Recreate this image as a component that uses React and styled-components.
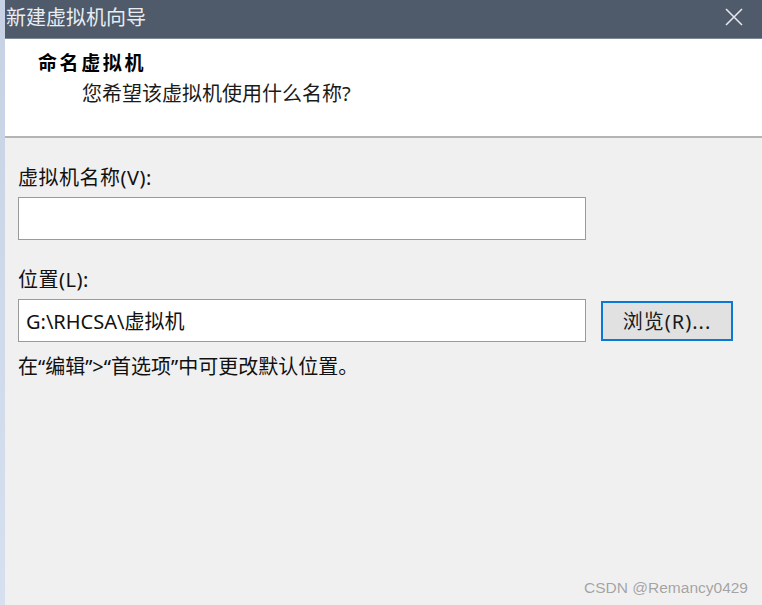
import React, { useState } from "react";
import styled, { createGlobalStyle } from "styled-components";

const GlobalStyle = createGlobalStyle`
  html, body {
    margin: 0;
    padding: 0;
    background: #f0f0f0;
  }

  body {
    font-family: "Noto Sans", "Noto Sans CJK SC", sans-serif;
    color: #111;
  }
`;

const Page = styled.div`
  display: flex;
  width: 762px;
  height: 605px;
  overflow: hidden;
`;

const SideStrip = styled.div`
  width: 5px;
  flex-shrink: 0;
  background: linear-gradient(#c6d2e4, #d6e0ef);
`;

const Wizard = styled.div`
  flex: 1;
  display: flex;
  flex-direction: column;
  min-width: 0;
`;

const TitleBar = styled.div`
  height: 39px;
  display: flex;
  align-items: center;
  justify-content: space-between;
  padding: 0 19px 5px 1px;
  box-sizing: border-box;
  background: #4f5a6a;
  border-bottom: 1px solid #7d8898;
  color: #e9edf2;
  font-size: 20px;
`;

const CloseButton = styled.button`
  display: flex;
  padding: 0;
  border: 0;
  background: transparent;
  cursor: pointer;
`;

const Header = styled.div`
  height: 99px;
  box-sizing: border-box;
  padding: 11px 0 0 33px;
  background: #fff;
  border-bottom: 2px solid #b4b4b4;
`;

const HeaderTitle = styled.div`
  font-size: 19px;
  line-height: 26px;
  font-weight: bold;
  letter-spacing: 2.6px;
  color: #000;
`;

const HeaderText = styled.div`
  margin: 5px 0 0 44px;
  font-size: 20px;
  line-height: 26px;
  color: #1a1a1a;
`;

const Body = styled.div`
  flex: 1;
  display: flex;
  flex-direction: column;
  padding: 27px 14px 8px 13px;
  background: #f0f0f0;
`;

const Label = styled.label`
  font-size: 20px;
  line-height: 26px;
  letter-spacing: 0.5px;
  margin-top: ${p => p.$gap || 0}px;
`;

const Row = styled.div`
  display: flex;
  align-items: center;
  gap: 15px;
  margin-top: 6px;
`;

const TextInput = styled.input`
  width: 568px;
  height: 43px;
  box-sizing: border-box;
  padding: 0 7px;
  border: 1px solid #9a9a9a;
  background: #fff;
  font-family: inherit;
  font-size: 20px;
  color: #111;
  outline: none;
`;

const BrowseButton = styled.button`
  width: 132px;
  height: 40px;
  box-sizing: border-box;
  border: 2px solid #0a78d4;
  background: #e1e1e1;
  font-family: inherit;
  font-size: 20px;
  letter-spacing: 1px;
  color: #1a1a1a;
  cursor: pointer;
`;

const Hint = styled.div`
  margin-top: 12px;
  font-size: 20px;
  line-height: 26px;
`;

const Watermark = styled.div`
  margin-top: auto;
  align-self: flex-end;
  font-family: "Liberation Sans", Arial, sans-serif;
  font-size: 15.5px;
  color: #a3a3a3;
  text-shadow: 0 0 1px #fff;
`;

function CloseIcon() {
  return (
    <svg width="18" height="18" viewBox="0 0 18 18">
      <path d="M1 1 L17 17 M17 1 L1 17" stroke="#e4e7ec" strokeWidth="1.6" />
    </svg>
  );
}

export default function App() {
  const [name, setName] = useState("");
  const [location, setLocation] = useState("G:\\RHCSA\\虚拟机");

  return (
    <>
      <GlobalStyle />
      <Page>
        <SideStrip />
        <Wizard>
          <TitleBar>
            <span>新建虚拟机向导</span>
            <CloseButton aria-label="关闭">
              <CloseIcon />
            </CloseButton>
          </TitleBar>
          <Header>
            <HeaderTitle>命名虚拟机</HeaderTitle>
            <HeaderText>您希望该虚拟机使用什么名称?</HeaderText>
          </Header>
          <Body>
            <Label>虚拟机名称(V):</Label>
            <Row>
              <TextInput value={name} onChange={e => setName(e.target.value)} />
            </Row>
            <Label $gap={27}>位置(L):</Label>
            <Row>
              <TextInput
                value={location}
                onChange={e => setLocation(e.target.value)}
              />
              <BrowseButton>浏览(R)...</BrowseButton>
            </Row>
            <Hint>在“编辑”&gt;“首选项”中可更改默认位置。</Hint>
            <Watermark>CSDN @Remancy0429</Watermark>
          </Body>
        </Wizard>
      </Page>
    </>
  );
}
